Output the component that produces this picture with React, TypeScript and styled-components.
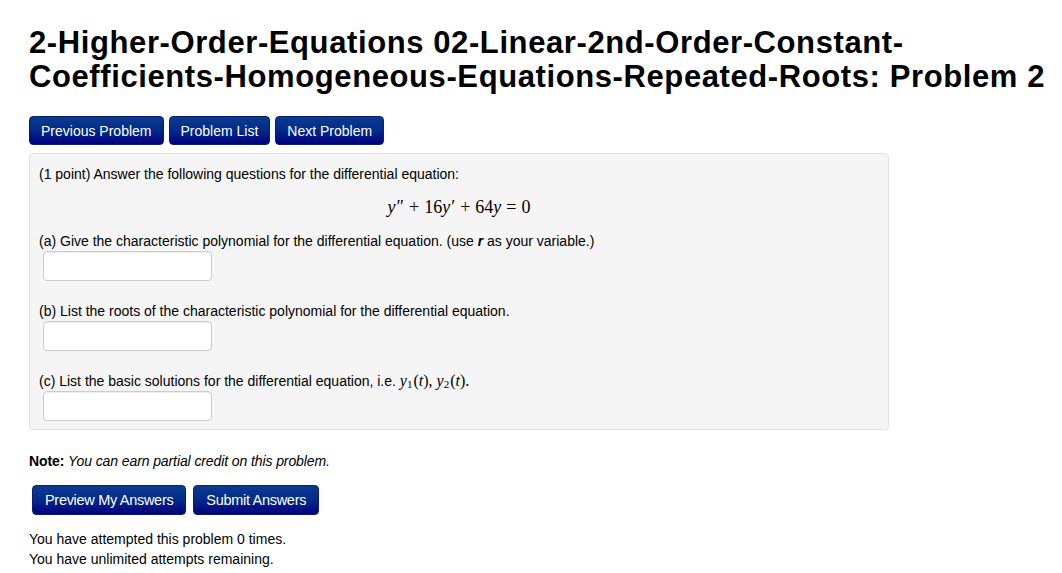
import React from "react";
import styled, { createGlobalStyle } from "styled-components";

const Global = createGlobalStyle`
  html, body { margin: 0; padding: 0; background: #fff; }
  body { font-family: "Liberation Sans", Arial, Helvetica, sans-serif; color: #000; }
`;

const Page = styled.div`
  padding: 26px 0 0 29px;
  width: 1033px;
`;

const Title = styled.h1`
  margin: 0;
  font-size: 31px;
  line-height: 34px;
  font-weight: bold;
  letter-spacing: 0.6px;
  white-space: nowrap;
`;

const NavRow = styled.div`
  display: flex;
  gap: 5px;
  margin-top: 22px;
`;

const Button = styled.button<{ $big?: boolean }>`
  font-family: "Liberation Sans", Arial, Helvetica, sans-serif;
  font-size: ${(p) => (p.$big ? "14.5px" : "14px")};
  color: #fff;
  height: ${(p) => (p.$big ? "30px" : "29px")};
  padding: 0 ${(p) => (p.$big ? "12px" : "11px")};
  border: 1px solid #0a1f6e;
  border-radius: 4px;
  background: linear-gradient(to bottom, #0b3b8f 0%, #002a88 50%, #000080 100%);
  letter-spacing: ${(p) => (p.$big ? "-0.3px" : "0")};
  cursor: pointer;
`;

const Panel = styled.div`
  margin-top: 8px;
  background: #f5f5f5;
  border: 1px solid #e3e3e3;
  border-radius: 4px;
  padding: 10px 9px 8px;
  font-size: 14px;
  line-height: 20px;
  box-sizing: content-box;
  width: 840px;
`;

const Para = styled.div<{ $gap?: number }>`
  margin-top: ${(p) => p.$gap ?? 0}px;
`;

const Equation = styled.div`
  margin-top: 13px;
  text-align: center;
  font-family: "Liberation Serif", "Times New Roman", serif;
  font-size: 18px;
  line-height: 20px;
`;

const Op = styled.span`
  margin: 0 5px;
`;

const Var = styled.i`
  font-family: "Liberation Serif", "Times New Roman", serif;
  font-style: italic;
`;

const Prime = styled.span`
  margin-left: 1px;
`;

const BoldVar = styled.b`
  font-style: italic;
  font-family: "Liberation Sans", Arial, sans-serif;
`;

const MathInline = styled.span`
  font-family: "Liberation Serif", "Times New Roman", serif;
  font-size: 16px;
`;

const Sub = styled.sub`
  font-size: 11px;
  vertical-align: -2px;
  line-height: 0;
  margin-right: 1px;
`;

const Input = styled.input`
  display: block;
  margin: 0 0 0 4px;
  width: 169px;
  height: 30px;
  box-sizing: border-box;
  border: 1px solid #cccccc;
  border-radius: 4px;
  background: #fff;
  box-shadow: inset 0 1px 1px rgba(0, 0, 0, 0.075);
`;

const Note = styled.div`
  margin-top: 21px;
  font-size: 14px;
  line-height: 20px;
  letter-spacing: -0.1px;
`;

const SubmitRow = styled.div`
  display: flex;
  gap: 7px;
  margin-top: 14px;
  margin-left: 3px;
`;

const Status = styled.div`
  margin-top: 14px;
  font-size: 14px;
  line-height: 20px;
`;

export default function App() {
  return (
    <>
      <Global />
      <Page>
        <Title>
          2-Higher-Order-Equations 02-Linear-2nd-Order-Constant-
          <br />
          Coefficients-Homogeneous-Equations-Repeated-Roots: Problem 2
        </Title>
        <NavRow>
          <Button>Previous Problem</Button>
          <Button>Problem List</Button>
          <Button>Next Problem</Button>
        </NavRow>
        <Panel>
          <Para>(1 point) Answer the following questions for the differential equation:</Para>
          <Equation>
            <Var>y</Var>
            <Prime>″</Prime>
            <Op>+</Op>16<Var>y</Var>
            <Prime>′</Prime>
            <Op>+</Op>64<Var>y</Var>
            <Op>=</Op>0
          </Equation>
          <Para $gap={14}>
            (a) Give the characteristic polynomial for the differential equation. (use <BoldVar>r</BoldVar> as your variable.)
          </Para>
          <Input type="text" />
          <Para $gap={20}>(b) List the roots of the characteristic polynomial for the differential equation.</Para>
          <Input type="text" />
          <Para $gap={20}>
            (c) List the basic solutions for the differential equation, i.e.{" "}
            <MathInline>
              <Var>y</Var>
              <Sub>1</Sub>(<Var>t</Var>), <Var>y</Var>
              <Sub>2</Sub>(<Var>t</Var>).
            </MathInline>
          </Para>
          <Input type="text" />
        </Panel>
        <Note>
          <b>Note:</b> <i>You can earn partial credit on this problem.</i>
        </Note>
        <SubmitRow>
          <Button $big>Preview My Answers</Button>
          <Button $big>Submit Answers</Button>
        </SubmitRow>
        <Status>
          You have attempted this problem 0 times.
          <br />
          You have unlimited attempts remaining.
        </Status>
      </Page>
    </>
  );
}
